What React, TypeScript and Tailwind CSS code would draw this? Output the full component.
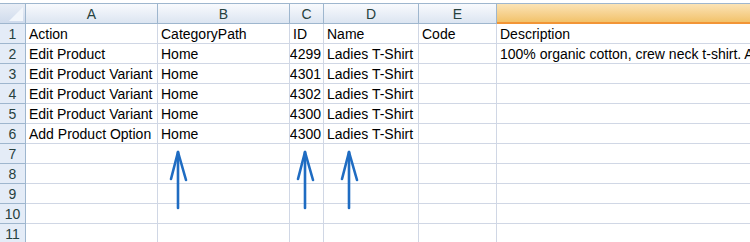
import React from "react";

const cols = "grid grid-cols-[26px_132px_132px_34px_95px_78px_1fr]";

const rows: string[][] = [
  ["Action", "CategoryPath", "ID", "Name", "Code", "Description"],
  ["Edit Product", "Home", "4299", "Ladies T-Shirt", "", "100% organic cotton, crew neck t-shirt. Available in many colours"],
  ["Edit Product Variant", "Home", "4301", "Ladies T-Shirt", "", ""],
  ["Edit Product Variant", "Home", "4302", "Ladies T-Shirt", "", ""],
  ["Edit Product Variant", "Home", "4300", "Ladies T-Shirt", "", ""],
  ["Add Product Option", "Home", "4300", "Ladies T-Shirt", "", ""],
  ["", "", "", "", "", ""],
  ["", "", "", "", "", ""],
  ["", "", "", "", "", ""],
  ["", "", "", "", "", ""],
  ["", "", "", "", "", ""],
];

function Arrow({ x }: { x: number }) {
  return (
    <g stroke="#1f6cc2" strokeWidth={2.6} fill="none" strokeLinecap="round" strokeLinejoin="round">
      <path d={`M${x} 208 L${x} 152`} />
      <path d={`M${x - 7} 179 L${x} 152 L${x + 8} 180`} />
    </g>
  );
}

export default function App() {
  return (
    <div
      className="relative w-[750px] h-[242px] overflow-hidden bg-white text-[14px] text-black"
      style={{ fontFamily: '"Liberation Sans", Arial, sans-serif' }}
    >
      <div className="h-[3px] bg-white" />
      <div className="h-px bg-[#9eb6ce]" />
      {/* header */}
      <div className={`${cols} h-[20px]`}>
        <div className="relative border-r border-b border-[#9eb6ce] bg-gradient-to-b from-[#e9eef6] to-[#cfdbec]">
          <div className="absolute right-[2px] bottom-[2px] w-0 h-0 border-l-[14px] border-l-transparent border-b-[14px] border-b-[#f2f6fb]" />
        </div>
        {["A", "B", "C", "D", "E"].map((l) => (
          <div
            key={l}
            className="flex items-center justify-center border-r border-b border-[#9eb6ce] bg-gradient-to-b from-[#f8fafd] to-[#dce5f1] text-[#27413e] leading-none"
          >
            {l}
          </div>
        ))}
        <div className="border-b-2 border-[#f29536] bg-gradient-to-b from-[#fbe3b5] to-[#f2c26a]" />
      </div>
      {rows.map((r, i) => (
        <div key={i} className={`${cols} h-[20px]`}>
          <div className="flex items-center justify-center border-r border-b border-[#9eb6ce] bg-[#e4ecf7] text-[#27413e] leading-none">
            {i + 1}
          </div>
          {r.map((c, j) => (
            <div
              key={j}
              className={`flex items-center border-b border-[#d0d7e5] whitespace-nowrap overflow-hidden leading-none ${
                j < 5 ? "border-r" : ""
              } ${j === 2 && i > 0 && c ? "justify-end pr-[2px]" : "pl-[3px]"}`}
            >
              {c}
            </div>
          ))}
        </div>
      ))}
      <svg className="absolute left-0 top-0 pointer-events-none" width={750} height={242}>
        <Arrow x={178} />
        <Arrow x={305} />
        <Arrow x={349} />
      </svg>
    </div>
  );
}
